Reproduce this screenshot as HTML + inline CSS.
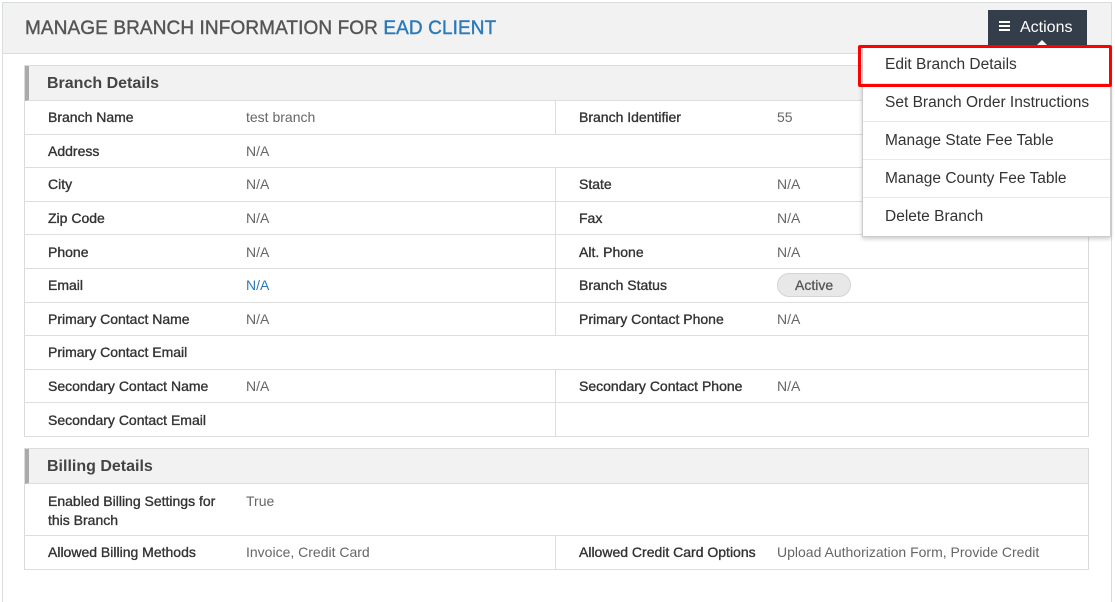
<!DOCTYPE html>
<html><head><style>
*{box-sizing:border-box;margin:0;padding:0}
body{width:1115px;height:563px;overflow:hidden;background:#fff;font-family:"Liberation Sans",sans-serif;position:relative}
.outer{position:absolute;left:2px;top:2px;width:1110px;height:600px;border:1px solid #d8dcdc;border-bottom:none}
.hdr{height:51px;background:#f2f2f2;border-bottom:1px solid #d8dcdc;padding:15px 0 0 22px;font-size:19px;color:#555;letter-spacing:.1px;-webkit-text-stroke:.4px}
.hdr span{color:#2a7ab9}
.sec{position:absolute;left:24px;width:1065px;border:1px solid #d8dcdc;border-bottom:none}
.sh{height:35px;background:#f2f2f2;border-left:4px solid #aaa;border-bottom:1px solid #ddd;padding:9px 0 0 18px;font-size:16px;font-weight:bold;color:#444}
.row{display:flex;border-bottom:1px solid #ddd;font-size:14px;color:#333;height:33.6px;align-items:center}
.c{display:flex;width:531px;height:100%;align-items:center;padding-left:23px}
.c+.c{border-left:1px solid #ddd;width:534px}
.l{width:198px;color:#333;-webkit-text-stroke:.35px}
.v{color:#666}
.b{color:#2a7ab9}
.badge{background:#e8e8e8;border:1px solid #d4d4d4;border-radius:12px;padding:3px 17px;color:#555;-webkit-text-stroke:.3px}
.btn{position:absolute;left:988px;top:10px;width:99px;height:35px;background:#343e4a;color:#fff;font-size:16px;padding:9px 0 0 11px}
.btn i{display:inline-block;width:11px;height:2px;background:#fff;box-shadow:0 4px #fff,0 -4px #fff;vertical-align:middle;margin:-3px 10px 0 0}
.btn:after{content:"";position:absolute;left:49px;bottom:0;border:5px solid transparent;border-bottom-color:#fff}
.dd{position:absolute;left:862px;top:45px;width:249px;background:#fff;border:1px solid #ccc;box-shadow:0 2px 4px rgba(0,0,0,.2)}
.dd div{height:38px;border-bottom:1px solid #e8e8e8;padding:10px 0 0 22px;font-size:15.5px;color:#333}
.dd div:last-child{border:none}
.red{position:absolute;left:858px;top:45px;width:254px;height:42px;border:3px solid #f00;border-radius:2px}
</style></head><body>
<div class="outer"><div class="hdr">MANAGE BRANCH INFORMATION FOR <span>EAD CLIENT</span></div></div>
<div class="sec" style="top:65px">
<div class="sh">Branch Details</div>
<div class="row"><div class="c"><span class="l">Branch Name</span><span class="v">test branch</span></div><div class="c"><span class="l">Branch Identifier</span><span class="v">55</span></div></div>
<div class="row"><div class="c" style="width:1065px"><span class="l">Address</span><span class="v">N/A</span></div></div>
<div class="row"><div class="c"><span class="l">City</span><span class="v">N/A</span></div><div class="c"><span class="l">State</span><span class="v">N/A</span></div></div>
<div class="row"><div class="c"><span class="l">Zip Code</span><span class="v">N/A</span></div><div class="c"><span class="l">Fax</span><span class="v">N/A</span></div></div>
<div class="row"><div class="c"><span class="l">Phone</span><span class="v">N/A</span></div><div class="c"><span class="l">Alt. Phone</span><span class="v">N/A</span></div></div>
<div class="row"><div class="c"><span class="l">Email</span><span class="b">N/A</span></div><div class="c"><span class="l">Branch Status</span><span class="badge">Active</span></div></div>
<div class="row"><div class="c"><span class="l">Primary Contact Name</span><span class="v">N/A</span></div><div class="c"><span class="l">Primary Contact Phone</span><span class="v">N/A</span></div></div>
<div class="row"><div class="c" style="width:1065px"><span class="l">Primary Contact Email</span></div></div>
<div class="row"><div class="c"><span class="l">Secondary Contact Name</span><span class="v">N/A</span></div><div class="c"><span class="l">Secondary Contact Phone</span><span class="v">N/A</span></div></div>
<div class="row"><div class="c"><span class="l">Secondary Contact Email</span></div><div class="c"></div></div>
</div>
<div class="sec" style="top:448px">
<div class="sh">Billing Details</div>
<div class="row" style="height:52px;align-items:flex-start;padding-top:8px"><div class="c" style="width:1065px;align-items:flex-start;line-height:19px"><span class="l" style="width:186px;margin-right:12px">Enabled Billing Settings for this Branch</span><span class="v">True</span></div></div>
<div class="row"><div class="c"><span class="l">Allowed Billing Methods</span><span class="v">Invoice, Credit Card</span></div><div class="c"><span class="l">Allowed Credit Card Options</span><span class="v">Upload Authorization Form, Provide Credit</span></div></div>
</div>
<div class="btn"><i></i>Actions</div>
<div class="dd"><div>Edit Branch Details</div><div>Set Branch Order Instructions</div><div>Manage State Fee Table</div><div>Manage County Fee Table</div><div>Delete Branch</div></div>
<div class="red"></div>
</body></html>
